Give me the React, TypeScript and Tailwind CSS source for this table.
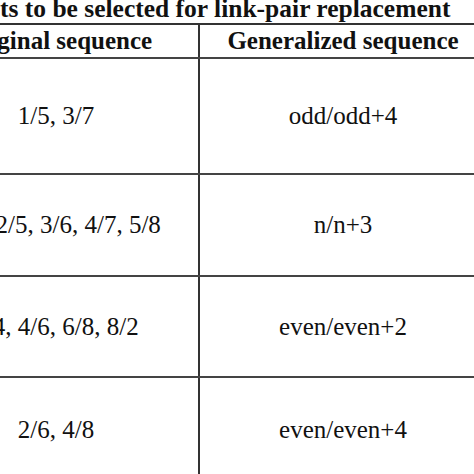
const rows = [
  { original: '1/5, 3/7', generalized: 'odd/odd+4', height: 'h-[116px]' },
  { original: '1/4, 2/5, 3/6, 4/7, 5/8', generalized: 'n/n+3', height: 'h-[102px]' },
  { original: '2/4, 4/6, 6/8, 8/2', generalized: 'even/even+2', height: 'h-[101px]' },
  { original: '2/6, 4/8', generalized: 'even/even+4', height: 'h-[104px]' },
];

export default function App() {
  return (
    <div
      className="w-[474px] h-[474px] overflow-hidden bg-white text-[#111]"
      style={{ fontFamily: '"Liberation Serif", "Times New Roman", serif' }}
    >
      <div className="h-[23px] whitespace-nowrap text-[25.5px] leading-[18px] font-bold">
        ts to be selected for link-pair replacement
      </div>

      <div className="ml-[-86px] w-[572px] border-t-2 border-[#333]">
        <div className="grid grid-cols-2 h-[34px] border-b-2 border-[#444] text-[25px] font-bold leading-[32px]">
          <div className="border-r-2 border-[#333] text-center whitespace-nowrap">Original sequence</div>
          <div className="text-center whitespace-nowrap">Generalized sequence</div>
        </div>

        {rows.map((row, i) => (
          <div
            key={i}
            className={`grid grid-cols-2 ${row.height} ${i < rows.length - 1 ? 'border-b-2 border-[#444]' : ''} text-[25px]`}
          >
            <div className="flex items-center justify-center border-r-2 border-[#333] whitespace-nowrap">
              {row.original}
            </div>
            <div className="flex items-center justify-center whitespace-nowrap">
              {row.generalized}
            </div>
          </div>
        ))}
      </div>
    </div>
  );
}
